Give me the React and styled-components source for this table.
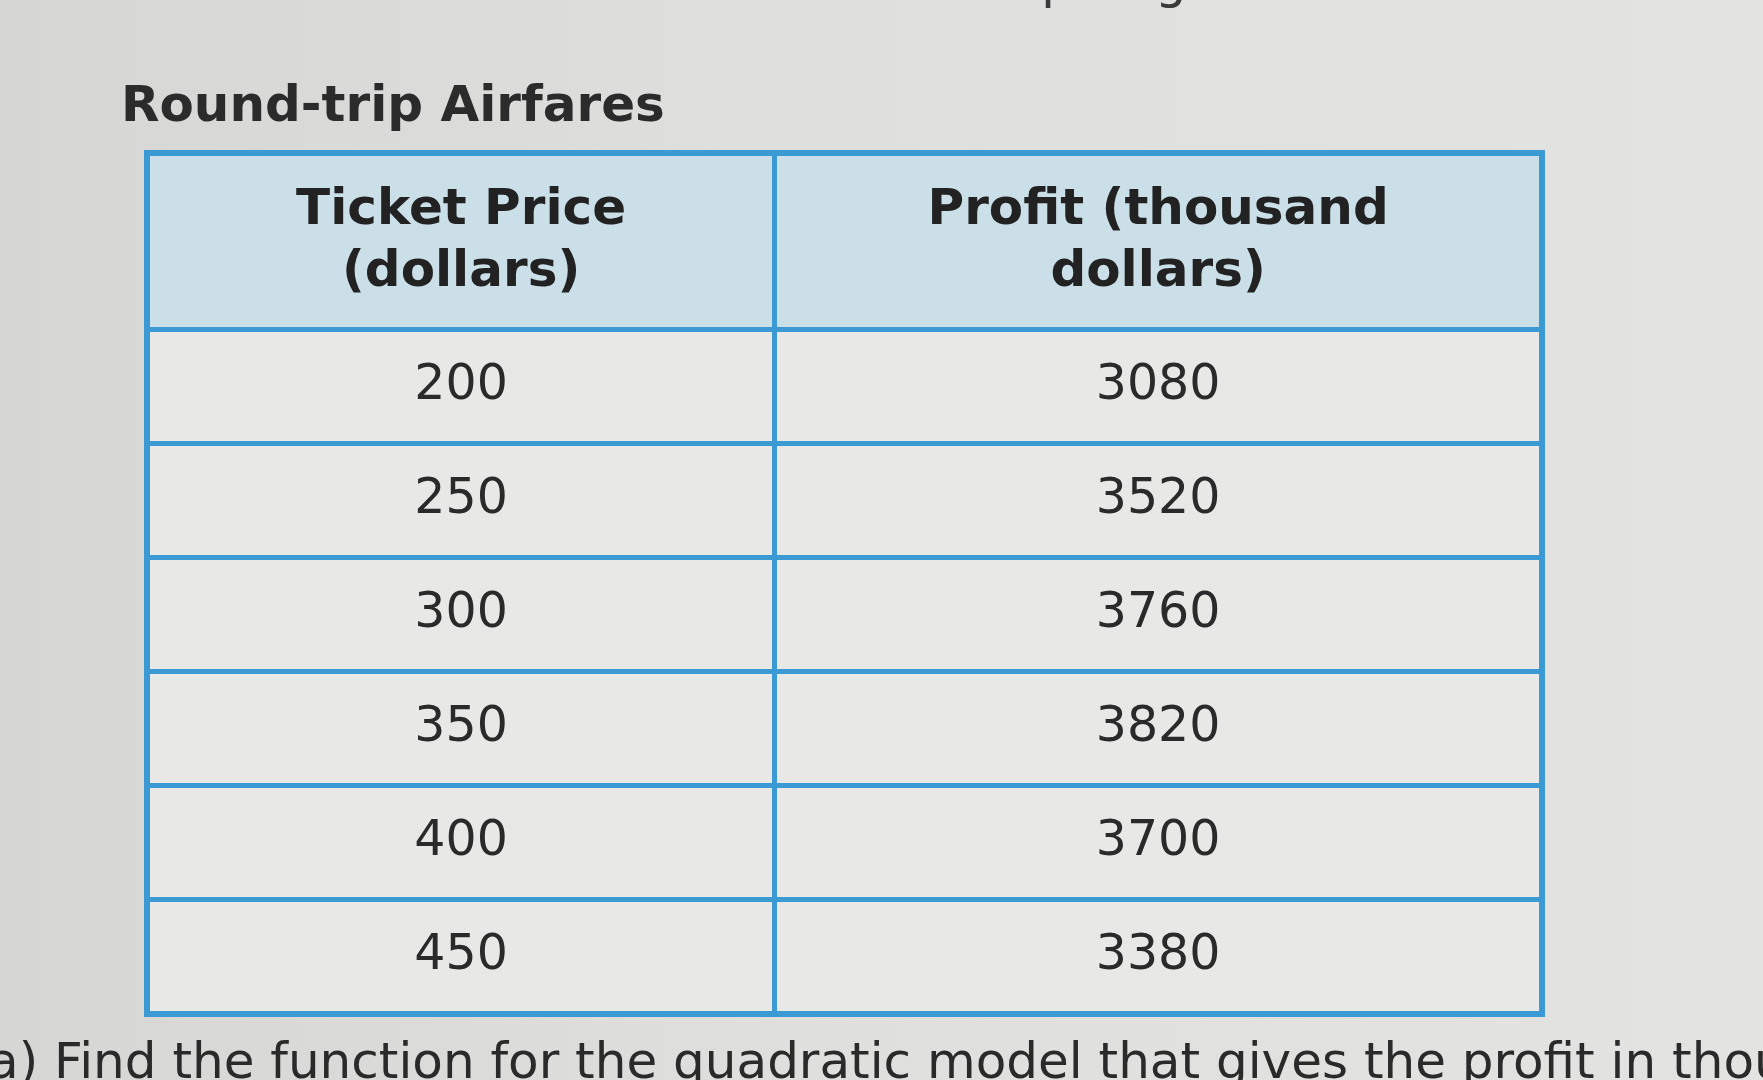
import styled, { createGlobalStyle } from 'styled-components';

const GlobalStyle = createGlobalStyle`
    html, body {
        margin: 0;
        padding: 0;
        width: 1763px;
        height: 1080px;
        overflow: hidden;
        background: linear-gradient(90deg, #d6d6d4 0%, #dfdfdd 45%, #e3e3e1 100%);
        font-family: "DejaVu Sans", Verdana, sans-serif;
        color: #262626;
    }
`;

const rows = [
    [200, 3080],
    [250, 3520],
    [300, 3760],
    [350, 3820],
    [400, 3700],
    [450, 3380],
];

const Page = styled.div`
    width: 1763px;
    height: 1080px;
    overflow: hidden;
    display: flex;
    flex-direction: column;
`;

// the line above the table, mostly scrolled off the top
const CutLine = styled.div`
    font-size: 50px;
    line-height: 60px;
    margin-top: -49px;
    padding-left: 498px;
    white-space: nowrap;
    color: #3a3a3a;
`;

const Section = styled.div`
    padding-left: 121px;
    margin-top: 63px;
`;

const Title = styled.h2`
    margin: 0 0 16px 0;
    font-size: 50px;
    line-height: 60px;
    font-weight: bold;
    color: #2b2b2b;
`;

const Table = styled.table`
    margin-left: 23px;
    width: 1401px;
    border-collapse: collapse;
    border: 6px solid #3b9ad3;
`;

const HeadCell = styled.th`
    width: ${(p) => p.$width};
    height: 163px;
    background: #cbdfe9;
    border: 5px solid #3b9ad3;
    font-size: 50px;
    line-height: 62px;
    font-weight: bold;
    color: #222;
    text-align: center;
    vertical-align: middle;
    padding: 0 0 8px 0;
`;

const Cell = styled.td`
    height: 101px;
    background: #e8e8e6;
    border: 5px solid #3b9ad3;
    font-size: 49px;
    color: #2a2a2a;
    text-align: center;
    vertical-align: middle;
    padding: 0 0 8px 0;
`;

const Question = styled.p`
    margin: 14px 0 0 -12px;
    font-size: 50px;
    line-height: 60px;
    white-space: nowrap;
    color: #2a2a2a;
`;

const App = () => {
    return (
        <Page>
            <GlobalStyle />
            <CutLine>the cost of a round trip to go from Denver to Chicago.</CutLine>
            <Section>
                <Title>Round-trip Airfares</Title>
                <Table>
                    <thead>
                        <tr>
                            <HeadCell $width="45%">
                                Ticket Price
                                <br />
                                (dollars)
                            </HeadCell>
                            <HeadCell $width="55%">
                                Profit (thousand
                                <br />
                                dollars)
                            </HeadCell>
                        </tr>
                    </thead>
                    <tbody>
                        {rows.map(([price, profit]) => (
                            <tr key={price}>
                                <Cell>{price}</Cell>
                                <Cell>{profit}</Cell>
                            </tr>
                        ))}
                    </tbody>
                </Table>
            </Section>
            <Question>a) Find the function for the quadratic model that gives the profit in thousand dollars.</Question>
        </Page>
    );
};

export default App;
